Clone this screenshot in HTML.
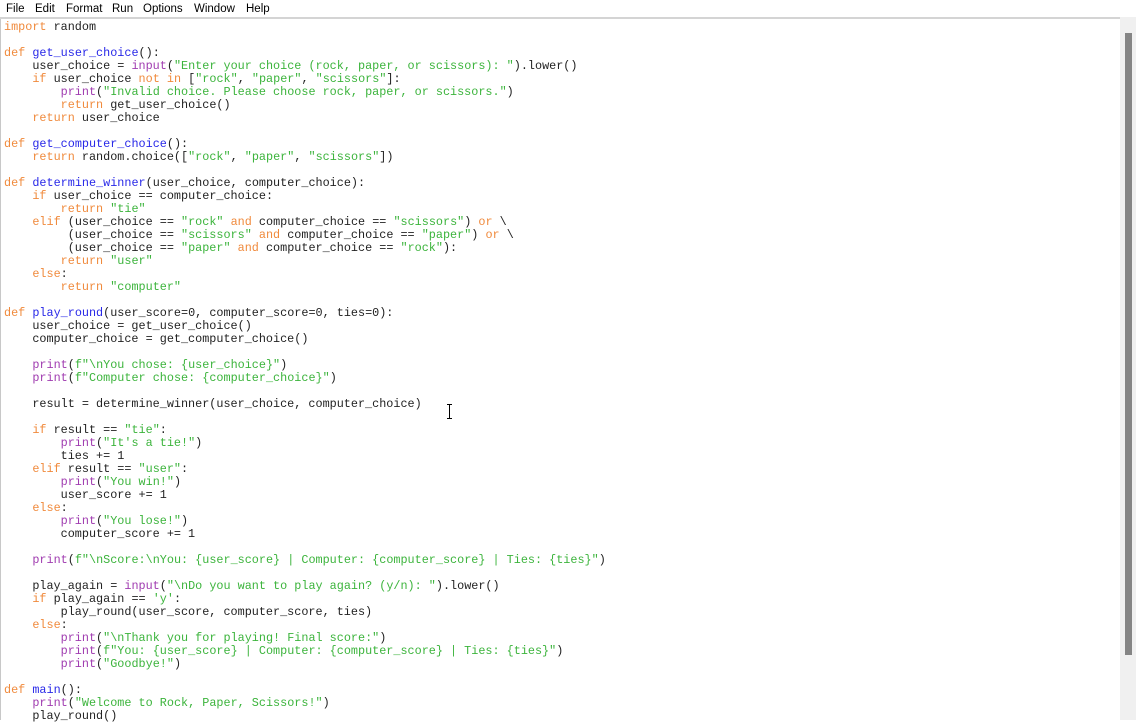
<!DOCTYPE html>
<html><head><meta charset="utf-8"><style>
html,body{margin:0;padding:0;width:1136px;height:720px;overflow:hidden;background:#fff;}
#menu{position:absolute;left:0;top:0;width:1136px;height:17px;background:#fff;font-family:"Liberation Sans",sans-serif;font-size:11.5px;color:#000;}
#menu span{position:absolute;top:3px;}
#sep{position:absolute;left:0;top:17px;width:1120px;height:2px;background:#d4d4d4;}
#lb{position:absolute;left:0;top:19px;width:1px;height:701px;background:#c8c8c8;}
#sb{position:absolute;left:1120px;top:17px;width:16px;height:703px;background:#f0f0f0;}
#thumb{position:absolute;left:1125px;top:33px;width:7px;height:622px;background:#858585;}
pre{position:absolute;left:4px;top:21px;margin:0;font-family:"Liberation Mono",monospace;font-size:11.8px;line-height:13px;color:#222;}
.k{color:#f08a3c}.b{color:#a03cb0}.s{color:#3cb43c}.d{color:#2828e8}
#cur{position:absolute;left:449px;top:404px;width:1px;height:15px;background:#000;}
#cur:before,#cur:after{content:"";position:absolute;left:-2px;width:5px;height:1px;background:#000;}
#cur:before{top:0}#cur:after{bottom:0}
</style></head><body>
<div id="menu"><span style="left:6px">File</span><span style="left:35px">Edit</span><span style="left:66px">Format</span><span style="left:112px">Run</span><span style="left:143px">Options</span><span style="left:194px">Window</span><span style="left:246px">Help</span></div>
<div id="sep"></div><div id="lb"></div>
<div id="sb"></div><div id="thumb"></div>
<pre><span class="k">import</span> random

<span class="k">def</span> <span class="d">get_user_choice</span>():
    user_choice = <span class="b">input</span>(<span class="s">"Enter your choice (rock, paper, or scissors): "</span>).lower()
    <span class="k">if</span> user_choice <span class="k">not</span> <span class="k">in</span> [<span class="s">"rock"</span>, <span class="s">"paper"</span>, <span class="s">"scissors"</span>]:
        <span class="b">print</span>(<span class="s">"Invalid choice. Please choose rock, paper, or scissors."</span>)
        <span class="k">return</span> get_user_choice()
    <span class="k">return</span> user_choice

<span class="k">def</span> <span class="d">get_computer_choice</span>():
    <span class="k">return</span> random.choice([<span class="s">"rock"</span>, <span class="s">"paper"</span>, <span class="s">"scissors"</span>])

<span class="k">def</span> <span class="d">determine_winner</span>(user_choice, computer_choice):
    <span class="k">if</span> user_choice == computer_choice:
        <span class="k">return</span> <span class="s">"tie"</span>
    <span class="k">elif</span> (user_choice == <span class="s">"rock"</span> <span class="k">and</span> computer_choice == <span class="s">"scissors"</span>) <span class="k">or</span> \
         (user_choice == <span class="s">"scissors"</span> <span class="k">and</span> computer_choice == <span class="s">"paper"</span>) <span class="k">or</span> \
         (user_choice == <span class="s">"paper"</span> <span class="k">and</span> computer_choice == <span class="s">"rock"</span>):
        <span class="k">return</span> <span class="s">"user"</span>
    <span class="k">else</span>:
        <span class="k">return</span> <span class="s">"computer"</span>

<span class="k">def</span> <span class="d">play_round</span>(user_score=0, computer_score=0, ties=0):
    user_choice = get_user_choice()
    computer_choice = get_computer_choice()

    <span class="b">print</span>(<span class="s">f"\nYou chose: {user_choice}"</span>)
    <span class="b">print</span>(<span class="s">f"Computer chose: {computer_choice}"</span>)

    result = determine_winner(user_choice, computer_choice)

    <span class="k">if</span> result == <span class="s">"tie"</span>:
        <span class="b">print</span>(<span class="s">"It's a tie!"</span>)
        ties += 1
    <span class="k">elif</span> result == <span class="s">"user"</span>:
        <span class="b">print</span>(<span class="s">"You win!"</span>)
        user_score += 1
    <span class="k">else</span>:
        <span class="b">print</span>(<span class="s">"You lose!"</span>)
        computer_score += 1

    <span class="b">print</span>(<span class="s">f"\nScore:\nYou: {user_score} | Computer: {computer_score} | Ties: {ties}"</span>)

    play_again = <span class="b">input</span>(<span class="s">"\nDo you want to play again? (y/n): "</span>).lower()
    <span class="k">if</span> play_again == <span class="s">'y'</span>:
        play_round(user_score, computer_score, ties)
    <span class="k">else</span>:
        <span class="b">print</span>(<span class="s">"\nThank you for playing! Final score:"</span>)
        <span class="b">print</span>(<span class="s">f"You: {user_score} | Computer: {computer_score} | Ties: {ties}"</span>)
        <span class="b">print</span>(<span class="s">"Goodbye!"</span>)

<span class="k">def</span> <span class="d">main</span>():
    <span class="b">print</span>(<span class="s">"Welcome to Rock, Paper, Scissors!"</span>)
    play_round()
</pre>
<div id="cur"></div>
</body></html>
